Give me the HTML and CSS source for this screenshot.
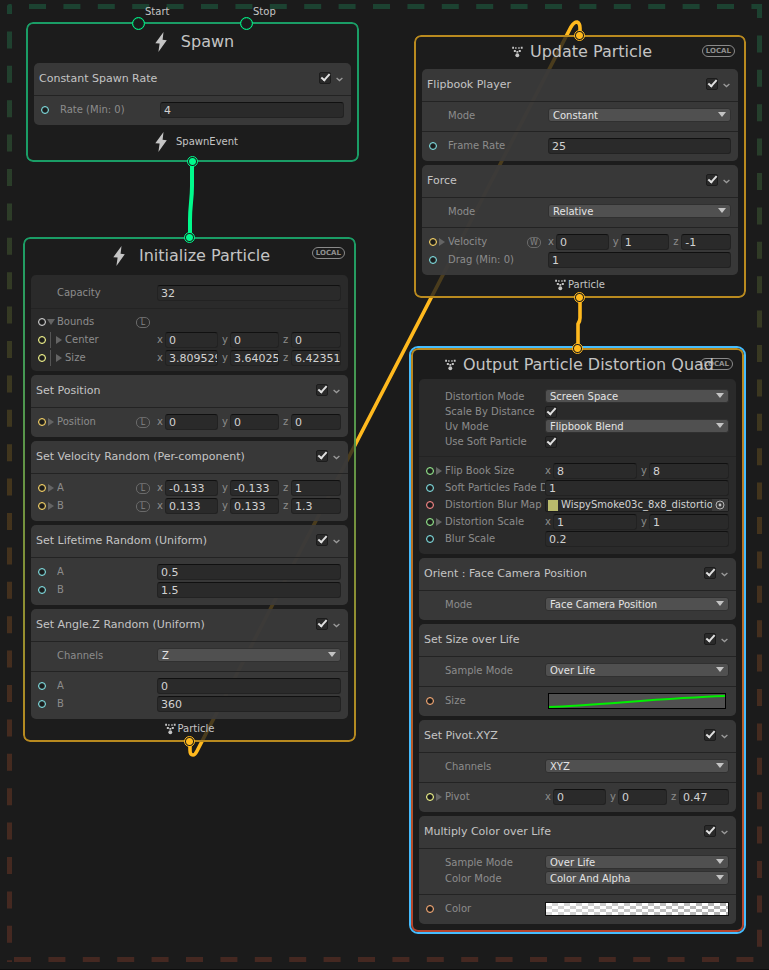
FILE: index.html
```html
<!DOCTYPE html>
<html lang="en">
<head>
<meta charset="utf-8">
<title>Particle graph</title>
<link rel="stylesheet" href="styles.css">
</head>
<body>
<svg class="symbols" aria-hidden="true">
  <symbol id="bolt" viewBox="0 0 12 20"><path d="M8.5 0 0.3 11.2 4.6 11.6 3.4 20 11.8 8.2 7.6 7.8z"/></symbol>
  <symbol id="dots" viewBox="0 0 12 12"><path d="M.2.4h2v2h-2zM3.4.8h1.6v1.6H3.4zM6.8.8h1.6v1.6H6.8zM9.6.4h2v2h-2zM2 3.8h2.2V6H2zM4.8 5h2v1.8h-2zM7.4 3.8h2.2V6H7.4z"/><circle cx="5.8" cy="9.5" r="2.1"/></symbol>
  <symbol id="chev" viewBox="0 0 7 5"><path d="M.6 1 3.5 3.6 6.4 1" fill="none" stroke="currentColor" stroke-width="1.3"/></symbol>
</svg>
<main class="graph">
  <svg class="frame" aria-hidden="true">
    <defs><linearGradient id="fade" gradientUnits="userSpaceOnUse" x1="0" y1="0" x2="0" y2="100%">
      <stop offset="0" stop-color="#1c4231"/><stop offset=".5" stop-color="#43351c"/><stop offset=".75" stop-color="#452b1f"/><stop offset="1" stop-color="#452821"/>
    </linearGradient></defs>
    <svg x="0" y="0" width="100%" height="5"><rect width="5" height="5" rx="3" fill="#1c4231"/><line class="d-top" x1="3" y1="2.5" x2="100%" y2="2.5"/></svg>
    <line class="d-bottom" x1="0" y1="100%" x2="100%" y2="100%"/>
    <line class="d-left" x1="2.5" y1="2" x2="2.5" y2="100%"/>
    <line class="d-right" x1="100%" y1="2" x2="100%" y2="100%"/>
  </svg>
  <svg class="wires" aria-hidden="true">
    <path class="wire go" d="M192 162V186C192 200 190 205 190 220V238"/>
    <path class="wire" d="M190 742V750Q190 755 193 755 195 755 197 751L571 27Q574 22 577 22 580 23 580 28V36"/>
    <path class="wire" d="M580 297V318Q580 321 578 324V349"/>
  </svg>

  <section class="node spawn">
    <span class="flow in-a">Start</span><span class="flow in-b">Stop</span>
    <h2 class="title tall"><svg class="bolt"><use href="#bolt"/></svg>Spawn</h2>
    <div class="blocks">
      <article class="block">
        <header><h3>Constant Spawn Rate</h3><input type="checkbox" class="tick" checked aria-label="Constant Spawn Rate enabled"><button class="fold" aria-label="Collapse"><svg><use href="#chev"/></svg></button></header>
        <div class="part">
          <div class="row"><i class="port cyan"></i><label for="rate">Rate (Min: 0)</label><input class="field" id="rate" value="4"></div>
        </div>
      </article>
    </div>
    <footer class="out tall"><svg class="bolt"><use href="#bolt"/></svg>SpawnEvent</footer>
    <i class="plug bottom green"></i>
  </section>

  <section class="node init">
    <i class="plug top green"></i>
    <h2 class="title mid"><svg class="bolt"><use href="#bolt"/></svg>Initialize Particle</h2>
    <span class="local">LOCAL</span>
    <div class="blocks">
      <article class="block dark">
        <div class="part lead">
          <div class="row"><label for="cap">Capacity</label><input class="field" id="cap" value="32"></div>
        </div>
        <div class="part snug">
          <div class="row"><i class="port white"></i><i class="arrow open"></i><span class="name">Bounds</span><b class="space">L</b></div>
          <div class="row child"><i class="port lemon"></i><i class="arrow"></i><span class="name">Center</span><div class="vec"><label>x<input class="field" value="0"></label><label>y<input class="field" value="0"></label><label>z<input class="field" value="0"></label></div></div>
          <div class="row child"><i class="port lemon"></i><i class="arrow"></i><span class="name">Size</span><div class="vec"><label>x<input class="field" value="3.809529"></label><label>y<input class="field" value="3.64025"></label><label>z<input class="field" value="6.423510"></label></div></div>
        </div>
      </article>
      <article class="block">
        <header><h3>Set Position</h3><input type="checkbox" class="tick" checked aria-label="Set Position enabled"><button class="fold" aria-label="Collapse"><svg><use href="#chev"/></svg></button></header>
        <div class="part">
          <div class="row"><i class="port gold"></i><i class="arrow"></i><span class="name">Position</span><b class="space">L</b><div class="vec"><label>x<input class="field" value="0"></label><label>y<input class="field" value="0"></label><label>z<input class="field" value="0"></label></div></div>
        </div>
      </article>
      <article class="block">
        <header><h3>Set Velocity Random (Per-component)</h3><input type="checkbox" class="tick" checked aria-label="Set Velocity Random enabled"><button class="fold" aria-label="Collapse"><svg><use href="#chev"/></svg></button></header>
        <div class="part">
          <div class="row"><i class="port gold"></i><i class="arrow"></i><span class="name">A</span><b class="space">L</b><div class="vec"><label>x<input class="field" value="-0.133"></label><label>y<input class="field" value="-0.133"></label><label>z<input class="field" value="1"></label></div></div>
          <div class="row"><i class="port gold"></i><i class="arrow"></i><span class="name">B</span><b class="space">L</b><div class="vec"><label>x<input class="field" value="0.133"></label><label>y<input class="field" value="0.133"></label><label>z<input class="field" value="1.3"></label></div></div>
        </div>
      </article>
      <article class="block">
        <header><h3>Set Lifetime Random (Uniform)</h3><input type="checkbox" class="tick" checked aria-label="Set Lifetime Random enabled"><button class="fold" aria-label="Collapse"><svg><use href="#chev"/></svg></button></header>
        <div class="part">
          <div class="row"><i class="port cyan"></i><label for="la">A</label><input class="field" id="la" value="0.5"></div>
          <div class="row"><i class="port cyan"></i><label for="lb">B</label><input class="field" id="lb" value="1.5"></div>
        </div>
      </article>
      <article class="block">
        <header><h3>Set Angle.Z Random (Uniform)</h3><input type="checkbox" class="tick" checked aria-label="Set Angle.Z Random enabled"><button class="fold" aria-label="Collapse"><svg><use href="#chev"/></svg></button></header>
        <div class="part">
          <div class="row"><label for="ach">Channels</label><select class="pick" id="ach"><option>Z</option></select></div>
        </div>
        <div class="part">
          <div class="row"><i class="port cyan"></i><label for="aa">A</label><input class="field" id="aa" value="0"></div>
          <div class="row"><i class="port cyan"></i><label for="ab">B</label><input class="field" id="ab" value="360"></div>
        </div>
      </article>
    </div>
    <footer class="out"><svg class="dots"><use href="#dots"/></svg>Particle</footer>
    <i class="plug bottom amber"></i>
  </section>

  <section class="node update">
    <i class="plug top amber"></i>
    <h2 class="title"><svg class="dots"><use href="#dots"/></svg>Update Particle</h2>
    <span class="local">LOCAL</span>
    <div class="blocks">
      <article class="block">
        <header><h3>Flipbook Player</h3><input type="checkbox" class="tick" checked aria-label="Flipbook Player enabled"><button class="fold" aria-label="Collapse"><svg><use href="#chev"/></svg></button></header>
        <div class="part">
          <div class="row"><label for="fm">Mode</label><select class="pick" id="fm"><option>Constant</option></select></div>
        </div>
        <div class="part">
          <div class="row"><i class="port cyan"></i><label for="fr">Frame Rate</label><input class="field" id="fr" value="25"></div>
        </div>
      </article>
      <article class="block">
        <header><h3>Force</h3><input type="checkbox" class="tick" checked aria-label="Force enabled"><button class="fold" aria-label="Collapse"><svg><use href="#chev"/></svg></button></header>
        <div class="part">
          <div class="row"><label for="om">Mode</label><select class="pick" id="om"><option>Relative</option></select></div>
        </div>
        <div class="part">
          <div class="row"><i class="port gold"></i><i class="arrow"></i><span class="name">Velocity</span><b class="space">W</b><div class="vec"><label>x<input class="field" value="0"></label><label>y<input class="field" value="1"></label><label>z<input class="field" value="-1"></label></div></div>
          <div class="row"><i class="port cyan"></i><label for="dr">Drag (Min: 0)</label><input class="field" id="dr" value="1"></div>
        </div>
      </article>
    </div>
    <footer class="out"><svg class="dots"><use href="#dots"/></svg>Particle</footer>
    <i class="plug bottom amber"></i>
  </section>

  <section class="node output">
    <i class="plug top amber"></i>
    <span class="local">LOCAL</span>
    <h2 class="title low"><svg class="dots"><use href="#dots"/></svg>Output Particle Distortion Quad</h2>
    <div class="blocks">
      <article class="block dark">
        <div class="part settings">
          <div class="row"><label for="dm">Distortion Mode</label><select class="pick" id="dm"><option>Screen Space</option></select></div>
          <div class="row"><label for="sd">Scale By Distance</label><input type="checkbox" class="tick" id="sd" checked></div>
          <div class="row"><label for="uv">Uv Mode</label><select class="pick" id="uv"><option>Flipbook Blend</option></select></div>
          <div class="row"><label for="sp">Use Soft Particle</label><input type="checkbox" class="tick" id="sp" checked></div>
        </div>
        <div class="part tight">
          <div class="row"><i class="port lime"></i><i class="arrow"></i><span class="name">Flip Book Size</span><div class="vec two"><label>x<input class="field" value="8"></label><label>y<input class="field" value="8"></label></div></div>
          <div class="row"><i class="port cyan"></i><label for="sf">Soft Particles Fade Distance</label><input class="field" id="sf" value="1"></div>
          <div class="row"><i class="port red"></i><label for="bm">Distortion Blur Map</label><div class="asset"><i class="thumb"></i><input id="bm" value="WispySmoke03c_8x8_distortion"><button aria-label="Select texture"><svg viewBox="0 0 10 10"><circle cx="5" cy="5" r="4" fill="none" stroke="#b4b4b4"/><circle cx="5" cy="5" r="1.4" fill="#c4c4c4"/></svg></button></div></div>
          <div class="row"><i class="port lime"></i><i class="arrow"></i><span class="name">Distortion Scale</span><div class="vec two"><label>x<input class="field" value="1"></label><label>y<input class="field" value="1"></label></div></div>
          <div class="row"><i class="port cyan"></i><label for="bs">Blur Scale</label><input class="field" id="bs" value="0.2"></div>
        </div>
      </article>
      <article class="block">
        <header><h3>Orient : Face Camera Position</h3><input type="checkbox" class="tick" checked aria-label="Orient enabled"><button class="fold" aria-label="Collapse"><svg><use href="#chev"/></svg></button></header>
        <div class="part">
          <div class="row"><label for="rm">Mode</label><select class="pick" id="rm"><option>Face Camera Position</option></select></div>
        </div>
      </article>
      <article class="block">
        <header><h3>Set Size over Life</h3><input type="checkbox" class="tick" checked aria-label="Set Size enabled"><button class="fold" aria-label="Collapse"><svg><use href="#chev"/></svg></button></header>
        <div class="part">
          <div class="row"><label for="sm">Sample Mode</label><select class="pick" id="sm"><option>Over Life</option></select></div>
        </div>
        <div class="part">
          <div class="row"><i class="port orange"></i><span class="name">Size</span><button class="curve" aria-label="Edit size curve"><svg viewBox="0 0 176 14" preserveAspectRatio="none"><path d="M0 13 C50 11 115 4 176 2"/></svg></button></div>
        </div>
      </article>
      <article class="block">
        <header><h3>Set Pivot.XYZ</h3><input type="checkbox" class="tick" checked aria-label="Set Pivot enabled"><button class="fold" aria-label="Collapse"><svg><use href="#chev"/></svg></button></header>
        <div class="part">
          <div class="row"><label for="pc">Channels</label><select class="pick" id="pc"><option>XYZ</option></select></div>
        </div>
        <div class="part">
          <div class="row"><i class="port lemon"></i><i class="arrow"></i><span class="name">Pivot</span><div class="vec"><label>x<input class="field" value="0"></label><label>y<input class="field" value="0"></label><label>z<input class="field" value="0.47"></label></div></div>
        </div>
      </article>
      <article class="block">
        <header><h3>Multiply Color over Life</h3><input type="checkbox" class="tick" checked aria-label="Multiply Color enabled"><button class="fold" aria-label="Collapse"><svg><use href="#chev"/></svg></button></header>
        <div class="part flush">
          <div class="row"><label for="cs">Sample Mode</label><select class="pick" id="cs"><option>Over Life</option></select></div>
          <div class="row"><label for="cm">Color Mode</label><select class="pick" id="cm"><option>Color And Alpha</option></select></div>
        </div>
        <div class="part">
          <div class="row"><i class="port orange"></i><span class="name">Color</span><button class="ramp" aria-label="Edit color gradient"></button></div>
        </div>
      </article>
    </div>
  </section>
</main>
</body>
</html>
```
FILE: styles.css
```css
* { box-sizing: border-box; }
body { margin: 0; background: #1b1b1b; color: #c4c4c4; font: 10px/16px "DejaVu Sans", sans-serif; }
input, select, button { font: inherit; color: inherit; margin: 0; padding: 0; border: 0; background: none; border-radius: 0; appearance: none; outline: 0; min-width: 0; }
svg { display: block; }
.symbols { position: absolute; width: 0; height: 0; }
.graph { position: relative; min-height: 970px; overflow: hidden; border-bottom: 1px solid #0d0d0d; }

/* dashed system outline */
.frame { position: absolute; left: 7px; top: 4px; width: calc(100% - 14px); height: calc(100% - 11px); }
.frame line { stroke: url(#fade); stroke-width: 5; }
.frame .d-top { stroke: #1c4231; stroke-dasharray: 17 17.4; stroke-dashoffset: 15.4; }
.frame .d-bottom { stroke: #452821; stroke-width: 10; stroke-dasharray: 17 17.4; stroke-dashoffset: 27.4; }
.frame .d-left { stroke-dasharray: 17 17.4; stroke-dashoffset: 9; }
.frame .d-right { stroke-width: 10; stroke-dasharray: 17 17.4; stroke-dashoffset: 5; }

.wires { position: absolute; inset: 0; width: 100%; height: 100%; }
.wire { fill: none; stroke: #ffb91e; stroke-width: 3.6; }
.wire.go { stroke: #00fa8c; stroke-width: 4; }

/* nodes */
.node { position: absolute; width: 333px; padding: 2px 8px; border-radius: 7px; background: rgba(29, 29, 29, .8); }
.node::before { content: ""; position: absolute; inset: 0; padding: 2px; border-radius: 7px; background: var(--edge); mask: linear-gradient(#000 0 0) content-box exclude, linear-gradient(#000 0 0); pointer-events: none; }
.spawn { left: 26px; top: 22px; --edge: #1a9d66; }
.init { left: 23px; top: 237px; --edge: linear-gradient(#1a9d66, #b98a1f); }
.update { left: 414px; top: 35px; width: 332px; --edge: #b98a1f; }
.output { left: 411px; top: 348px; padding-bottom: 8px; --edge: linear-gradient(#b98a1f, #b5442e); outline: 2px solid #45bdff; }

.title { position: relative; margin: 0; height: 32px; padding-bottom: 2px; padding-left: 4px; display: flex; align-items: center; justify-content: center; font-size: 16px; font-weight: 400; white-space: nowrap; }
.title.tall { height: 39px; padding-bottom: 4px; }
.title.mid { height: 36px; }
.title.low { height: 29px; padding-bottom: 0; }
.bolt { width: 12px; height: 20px; margin-right: 14px; fill: #c4c4c4; }
.dots { width: 11px; height: 12px; margin-right: 7px; fill: #c4c4c4; }
.local { position: absolute; right: 11px; top: 10px; height: 12px; padding: 0 3px; border: 1px solid #8a8a8a; border-radius: 6px; font-size: 7px; line-height: 10px; font-weight: 700; color: #8f8f8f; }
.out { height: 21px; padding-bottom: 1px; display: flex; align-items: center; justify-content: center; }
.out.tall { height: 35px; padding-left: 8px; }
.out .bolt { margin-right: 9px; }
.out .dots { margin-right: 2px; }

.flow { position: absolute; top: -18px; }
.flow::after { content: ""; position: absolute; left: -13px; top: 13px; width: 11px; height: 11px; border: 1px solid #00fa8c; border-radius: 50%; background: #1b1b1b; box-shadow: inset 0 0 1px #00fa8c; }
.in-a { left: 119px; }
.in-b { left: 227px; }
.plug { position: absolute; left: 50%; width: 11px; height: 11px; margin-left: -6px; border: 1px solid var(--c); border-radius: 50%; background: radial-gradient(circle, var(--c) 3px, #1b1b1b 4px); }
.plug.top { top: -5px; }
.plug.bottom { bottom: -5px; }
.green { --c: #00fa8c; }
.amber { --c: #ffb91e; }

/* blocks */
.blocks { display: grid; gap: 4px; }
.block { border-radius: 5px; background: rgba(59, 59, 59, .92); overflow: hidden; }
.block.dark { background: #2a2a2a; }
.block header { display: flex; align-items: center; height: 32px; padding: 0 8px 0 5px; }
h3 { flex: 1; margin: 0; font-size: 11px; font-weight: 400; white-space: nowrap; }
header .tick { margin-bottom: 2px; }
.fold { width: 7px; height: 5px; margin-left: 5px; color: #9a9a9a; }
.fold svg { width: 7px; height: 5px; }
.part { display: grid; gap: 2px; padding: 6px 7px 7px 0; border-top: 1px solid #232323; }
.part.lead { padding: 10px 7px 7px 0; border: 0; }
.part.snug { padding: 5px 7px 5px 0; }
.part.flush { gap: 0; }
.part.tight { gap: 1px; padding-bottom: 7px; }
.part.settings { gap: 0; padding: 10px 7px 7px 0; border: 0; }
.settings .row { height: 15px; }

.row { position: relative; display: grid; grid-template-columns: 26px 100px 1fr; align-items: center; height: 16px; color: #8c8c8c; }
.row > label, .name { grid-column: 2; grid-row: 1; overflow: hidden; white-space: nowrap; }
.row > .field, .pick, .vec, .asset, .curve, .ramp, .row > .tick { grid-column: 3; grid-row: 1; }
.port { position: absolute; left: 7px; width: 8px; height: 8px; border: 1px solid var(--p); border-radius: 50%; background: #1b1b1b; box-shadow: inset 0 0 1px var(--p); }
.cyan { --p: #84e4e7; }
.white { --p: #d6d6d6; }
.lemon { --p: #fbff91; }
.gold { --p: #ffda6b; }
.lime { --p: #9aef92; }
.red { --p: #ff8b8b; }
.orange { --p: #ffb07a; }
.arrow { position: absolute; left: 17px; border-left: 6px solid #646464; border-top: 4px solid transparent; border-bottom: 4px solid transparent; }
.arrow.open { border: 0; border-top: 6px solid #646464; border-left: 4px solid transparent; border-right: 4px solid transparent; left: 16px; }
.child .arrow { left: 25px; }
.child::before { content: ""; position: absolute; left: 19px; top: 0; bottom: 0; border-left: 1px solid #555; }
.child .name { padding-left: 8px; }
.space { position: absolute; left: 105px; width: 14px; height: 11px; border: 1px solid #6a6a6a; border-radius: 5px; font-size: 8px; line-height: 9px; font-weight: 400; text-align: center; color: #858585; }

.field { width: 100%; height: 16px; padding: 1px 3px 0; border: 1px solid #222; border-top-color: #101010; border-radius: 3px; background: #2a2a2a; color: #d2d2d2; font-size: 11px; }
.pick { align-self: start; width: 100%; height: 14px; padding-left: 4px; border: 1px solid #303030; border-radius: 3px; line-height: 11px; color: #e4e4e4; background: #505050; }
.row:has(.pick)::after { content: ""; position: absolute; right: 5px; top: 4px; border-top: 5px solid #c4c4c4; border-left: 4px solid transparent; border-right: 4px solid transparent; pointer-events: none; }
.vec { display: grid; grid-template-columns: 61fr 57fr 58fr; gap: 4px; }
.vec.two { grid-template-columns: 92fr 88fr; }
.vec label { display: grid; grid-template-columns: 8px 1fr; }
.vec .field { padding: 1px 0 0 3px; }
.tick { width: 12px; height: 12px; border: 1px solid #1c1c1c; border-radius: 2px; background: #2a2a2a; }
.tick:checked::after { content: ""; display: block; width: 7px; height: 3px; margin: 1px 0 0 1px; border: solid #e0e0e0; border-width: 0 0 2px 2px; transform: rotate(-48deg); }
.asset { display: flex; align-items: center; height: 14px; border: 1px solid #1c1c1c; border-radius: 2px; }
.asset input { flex: 1; height: 12px; margin-left: 3px; color: #d2d2d2; }
.thumb { width: 10px; height: 11px; margin-left: 2px; background: #babb6c; }
.asset button { width: 16px; height: 12px; padding: 1px 3px; background: #3a3a3a; }
.asset svg { width: 10px; height: 10px; }
.curve { height: 16px; margin: 0 3px; border: 1px solid #000; background: #505050; }
.curve svg { width: 100%; height: 14px; }
.curve path { fill: none; stroke: #00f000; stroke-width: 2; }
.ramp { height: 14px; border: 1px solid #111; background: linear-gradient(90deg, rgba(255, 255, 255, .5), rgba(255, 255, 255, 0)), repeating-conic-gradient(#b0b0b0 0 25%, #fff 0 50%) 0 0 / 12px 6px; }
```
